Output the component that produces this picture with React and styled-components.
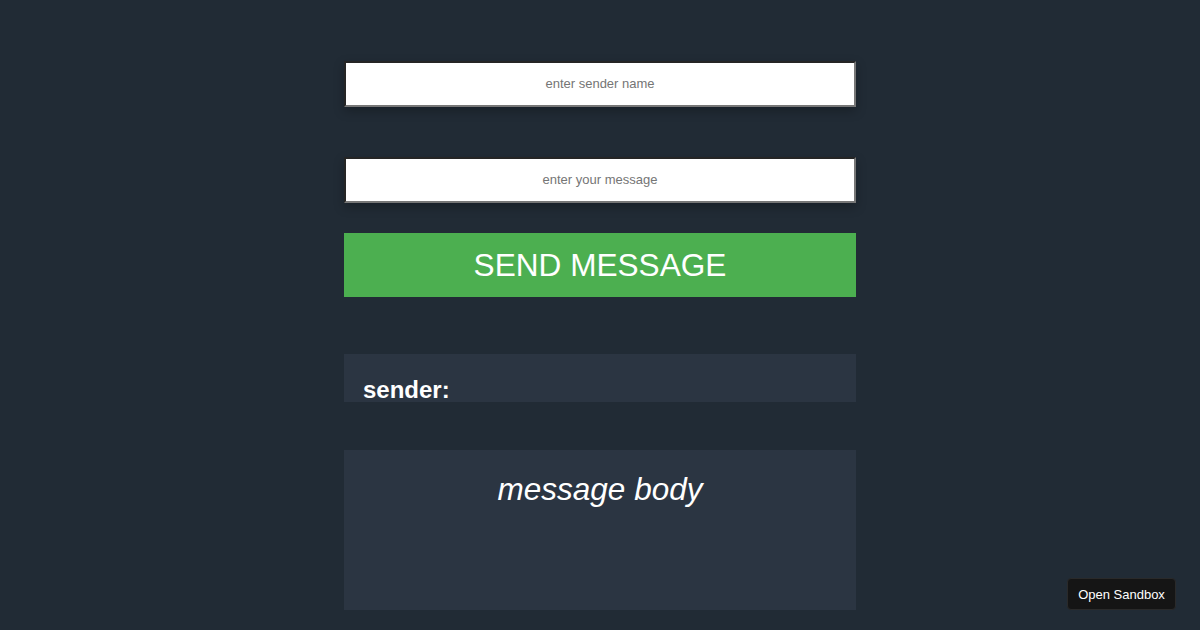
import React from "react";
import styled, { createGlobalStyle } from "styled-components";

const GlobalStyle = createGlobalStyle`
  html, body {
    margin: 0;
    padding: 0;
    background: #212b35;
    font-family: "Liberation Sans", Arial, sans-serif;
  }
`;

const Page = styled.div`
  min-height: 630px;
  display: flex;
  justify-content: center;
  padding-top: 61px;
  box-sizing: border-box;
`;

const Column = styled.div`
  width: 512px;
  display: flex;
  flex-direction: column;
`;

const Field = styled.input`
  box-sizing: border-box;
  width: 512px;
  height: 46px;
  padding: 0 0 2px;
  margin-bottom: ${(p) => p.$gap}px;
  border: 2px solid;
  border-color: #252525 #777 #777 #252525;
  background: #fff;
  text-align: center;
  font-family: "Liberation Sans", Arial, sans-serif;
  font-size: 13px;
  box-shadow: 0 4px 10px rgba(0, 0, 0, 0.25);
  outline: none;

  &::placeholder {
    color: #757575;
  }
`;

const SendButton = styled.button`
  height: 64px;
  width: 512px;
  border: none;
  background: #4caf50;
  color: #fff;
  font-family: "Liberation Sans", Arial, sans-serif;
  font-size: 31.6px;
  cursor: pointer;
  margin-bottom: 57px;
`;

const Card = styled.div`
  background: #2b3542;
  color: #fff;
  box-sizing: border-box;
  height: ${(p) => p.$height}px;
  overflow: hidden;
`;

const SenderLabel = styled.div`
  padding: 22px 19px 0;
  font-size: 24px;
  font-weight: bold;
`;

const Spacer = styled.div`
  height: 48px;
`;

const Body = styled.div`
  padding-top: 21px;
  text-align: center;
  font-size: 31.5px;
  font-style: italic;
`;

const SandboxButton = styled.button`
  position: fixed;
  right: 24px;
  bottom: 20px;
  box-sizing: border-box;
  width: 109px;
  height: 32px;
  padding: 0;
  border: 1px solid #2a2a2a;
  border-radius: 4px;
  background: #151515;
  color: #fff;
  text-align: center;
  font-family: "Liberation Sans", Arial, sans-serif;
  font-size: 13px;
`;

export default function App() {
  return (
    <>
      <GlobalStyle />
      <Page>
        <Column>
          <Field placeholder="enter sender name" $gap={50} />
          <Field placeholder="enter your message" $gap={30} />
          <SendButton>SEND MESSAGE</SendButton>
          <Card $height={48}>
            <SenderLabel>sender:</SenderLabel>
          </Card>
          <Spacer />
          <Card $height={160}>
            <Body>message body</Body>
          </Card>
        </Column>
      </Page>
      <SandboxButton>Open Sandbox</SandboxButton>
    </>
  );
}
